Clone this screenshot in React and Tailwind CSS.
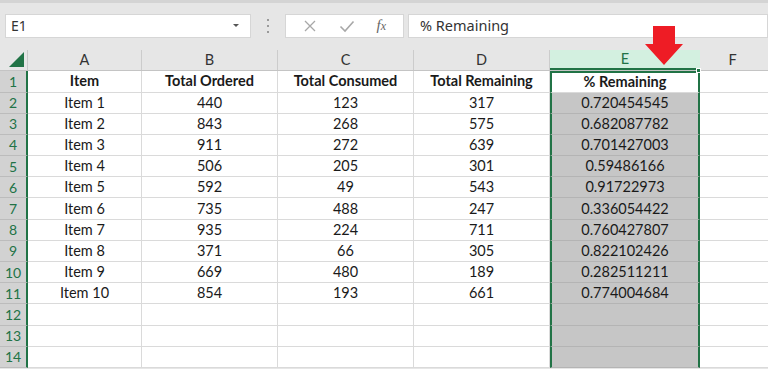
const ROWS = [
  ['Item 1', 440, 123, 317, '0.720454545'],
  ['Item 2', 843, 268, 575, '0.682087782'],
  ['Item 3', 911, 272, 639, '0.701427003'],
  ['Item 4', 506, 205, 301, '0.59486166'],
  ['Item 5', 592, 49, 543, '0.91722973'],
  ['Item 6', 735, 488, 247, '0.336054422'],
  ['Item 7', 935, 224, 711, '0.760427807'],
  ['Item 8', 371, 66, 305, '0.822102426'],
  ['Item 9', 669, 480, 189, '0.282511211'],
  ['Item 10', 854, 193, 661, '0.774004684'],
  ['', '', '', '', ''],
  ['', '', '', '', ''],
  ['', '', '', '', ''],
];

function Cell({ w, children, bold, sel }) {
  return (
    <div
      className={`${w} h-full flex items-center justify-center border-r border-b ${
        sel ? 'bg-[#c6c6c6] border-[#b4b4b4]' : 'bg-white border-[#dadada]'
      } ${bold ? 'font-bold' : ''} text-[14.5px] text-[#1a1a1a] shrink-0`}
    >
      {children}
    </div>
  );
}

function RowHead({ n }) {
  return (
    <div className="w-[28px] h-full shrink-0 flex items-center justify-center bg-[#d2d2d2] border-b border-[#bcbcbc] border-r-2 border-r-[#217346] text-[14px] text-[#217346]">
      {n}
    </div>
  );
}

export default function App() {
  return (
    <div className="w-[768px] h-[369px] overflow-hidden bg-[#e6e6e6] relative" style={{ fontFamily: 'Lato, "Open Sans", sans-serif' }}>
      {/* formula bar */}
      <div className="h-[3px] bg-[#d4d4d4]" />
      <div className="flex items-center h-[47px] pb-[2px] pl-[5px]">
        <div className="w-[246px] h-[24px] bg-white border border-[#d6d6d6] flex items-center justify-between px-[5px]" style={{ fontFamily: '"Noto Sans", sans-serif' }}>
          <span className="text-[14px] text-[#333]">E1</span>
          <svg width="8" height="5" viewBox="0 0 8 5" className="mr-[5px]"><path d="M1 1 L4 4 L7 1 Z" fill="#555" /></svg>
        </div>
        <div className="w-[34px] flex flex-col items-center gap-[4px]">
          <span className="w-[2px] h-[2px] bg-[#9a9a9a]" />
          <span className="w-[2px] h-[2px] bg-[#9a9a9a]" />
          <span className="w-[2px] h-[2px] bg-[#9a9a9a]" />
        </div>
        <div className="w-[119px] h-[24px] bg-white border border-[#d6d6d6] flex items-center justify-around px-[6px]">
          <svg width="14" height="14" viewBox="0 0 14 14"><path d="M2 2 L12 12 M12 2 L2 12" stroke="#a8a8a8" strokeWidth="1.3" /></svg>
          <svg width="16" height="14" viewBox="0 0 16 14"><path d="M1.5 7.5 L6 12 L14.5 2.5" stroke="#a8a8a8" strokeWidth="1.6" fill="none" /></svg>
          <span className="text-[15px] italic text-[#666]" style={{ fontFamily: '"Liberation Serif", serif' }}>f<span className="text-[12px]">x</span></span>
        </div>
        <div className="flex-1 ml-[4px] h-[24px] bg-white border border-[#d6d6d6] flex items-center px-[11px] text-[14.5px] text-[#333]" style={{ fontFamily: '"Noto Sans", sans-serif' }}>
          % Remaining
        </div>
      </div>

      {/* column headers */}
      <div className="flex h-[21px] bg-[#e6e6e6] border-b border-[#c4c4c4]">
        <div className="w-[28px] h-full shrink-0 flex items-end justify-end pr-[3px] pb-[3px] border-r border-[#c8c8c8]">
          <svg width="15" height="15" viewBox="0 0 15 15"><path d="M15 0 L15 15 L0 15 Z" fill="#217346" /></svg>
        </div>
        {[['A', 'w-[114px]'], ['B', 'w-[136px]'], ['C', 'w-[136px]'], ['D', 'w-[136px]']].map(([l, w]) => (
          <div key={l} className={`${w} h-full shrink-0 flex items-center justify-center border-r border-[#cccccc] text-[14.5px] text-[#333]`}>{l}</div>
        ))}
        <div className="w-[150px] h-full shrink-0 flex items-center justify-center bg-[#d3f0e0] border-b-2 border-[#217346] text-[14.5px] text-[#217346]">E</div>
        <div className="flex-1 h-full flex items-center justify-center text-[14.5px] text-[#333] pr-[3px]">F</div>
      </div>

      {/* header row 1 */}
      <div className="flex h-[21.5px]">
        <RowHead n={1} />
        <Cell w="w-[114px]" bold>Item</Cell>
        <Cell w="w-[136px]" bold>Total Ordered</Cell>
        <Cell w="w-[136px]" bold>Total Consumed</Cell>
        <Cell w="w-[136px]" bold>Total Remaining</Cell>
        <div className="w-[150px] h-full shrink-0 flex items-center justify-center bg-white border-x-2 border-t-2 border-[#217346] border-b border-b-[#dadada] font-bold text-[14.5px] text-[#1a1a1a]">% Remaining</div>
        <div className="flex-1 h-full bg-white border-b border-[#dadada]" />
      </div>

      {ROWS.map((r, i) => (
        <div key={i} className="flex h-[21.2px]">
          <RowHead n={i + 2} />
          <Cell w="w-[114px]">{r[0]}</Cell>
          <Cell w="w-[136px]">{r[1]}</Cell>
          <Cell w="w-[136px]">{r[2]}</Cell>
          <Cell w="w-[136px]">{r[3]}</Cell>
          <div className="w-[150px] h-full shrink-0 flex items-center justify-center bg-[#c6c6c6] border-x-2 border-[#217346] border-b border-b-[#b4b4b4] text-[14.5px] text-[#1a1a1a]">{r[4]}</div>
          <div className="flex-1 h-full bg-white border-b border-[#dadada]" />
        </div>
      ))}

      {/* fill handle */}
      <div className="absolute left-[696px] top-[68px] w-[5px] h-[5px] bg-[#217346] border border-white" />

      {/* red arrow */}
      <svg className="absolute left-[644px] top-[25px]" width="40" height="41" viewBox="0 0 40 41">
        <path d="M9 1 L31 1 L31 19 L39 19 L20 40 L1 19 L9 19 Z" fill="#ee1c25" />
      </svg>
    </div>
  );
}
